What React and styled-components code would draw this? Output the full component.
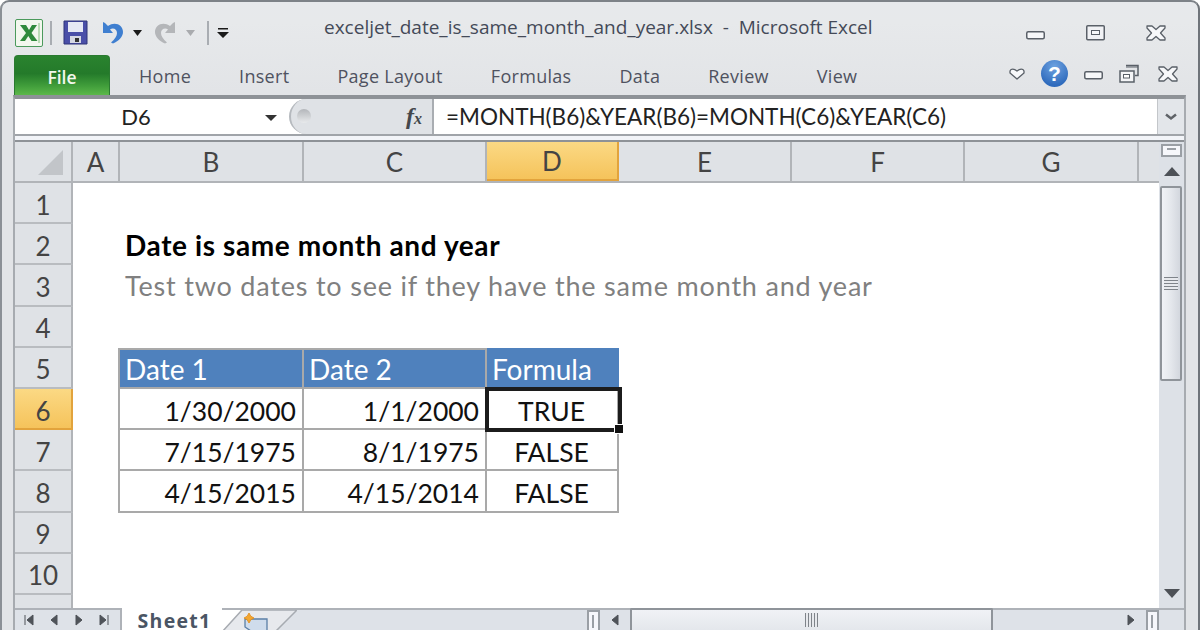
import styled, { createGlobalStyle } from 'styled-components';

const colWidths = '47px 184px 183px 132px 173px 173px 174px';
const columns = ['A', 'B', 'C', 'D', 'E', 'F', 'G'];
const tabs = ['Home', 'Insert', 'Page Layout', 'Formulas', 'Data', 'Review', 'View'];

const tableRows = {
    5: [{ text: 'Date 1', head: true, col: 2 }, { text: 'Date 2', head: true, col: 3 }, { text: 'Formula', head: true, col: 4 }],
    6: [{ text: '1/30/2000', col: 2, align: 'right' }, { text: '1/1/2000', col: 3, align: 'right' }, { text: 'TRUE', col: 4, align: 'center', selected: true }],
    7: [{ text: '7/15/1975', col: 2, align: 'right' }, { text: '8/1/1975', col: 3, align: 'right' }, { text: 'FALSE', col: 4, align: 'center' }],
    8: [{ text: '4/15/2015', col: 2, align: 'right' }, { text: '4/15/2014', col: 3, align: 'right' }, { text: 'FALSE', col: 4, align: 'center' }],
};

export default function App() {
    return (
        <Window>
            <GlobalStyle />
            <TitleBar>
                <QuickAccess>
                    <ExcelIcon />
                    <Divider />
                    <SaveIcon />
                    <UndoIcon color="#3f7fd0" />
                    <Caret color="#1a1a1a" />
                    <RedoIcon />
                    <Caret color="#a9abae" />
                    <Divider />
                    <CustomizeIcon />
                </QuickAccess>
                <WindowTitle>exceljet_date_is_same_month_and_year.xlsx&nbsp; -&nbsp; Microsoft Excel</WindowTitle>
                <WindowButtons>
                    <MinimizeIcon />
                    <MaximizeIcon />
                    <CloseIcon />
                </WindowButtons>
            </TitleBar>

            <TabRow>
                <FileTab>File</FileTab>
                <Tabs>
                    {tabs.map(tab => <Tab key={tab}>{tab}</Tab>)}
                </Tabs>
                <RibbonButtons>
                    <HeartChevron />
                    <HelpCircle>?</HelpCircle>
                    <MinimizeIcon />
                    <RestoreIcon />
                    <CloseIcon />
                </RibbonButtons>
            </TabRow>

            <Workbook>
                <FormulaBar>
                    <NameBox>
                        <NameText>D6</NameText>
                        <Caret color="#333" width={12} />
                    </NameBox>
                    <FormulaTools>
                        <Knob />
                        <Fx>f<sub>x</sub></Fx>
                    </FormulaTools>
                    <FormulaInput>=MONTH(B6)&amp;YEAR(B6)=MONTH(C6)&amp;YEAR(C6)</FormulaInput>
                    <ExpandButton><ChevronDown /></ExpandButton>
                </FormulaBar>
                <FormulaGap />

                <SheetArea>
                    <Sheet>
                        <ColumnHeaders>
                            <Corner><CornerTriangle /></Corner>
                            <ColumnGrid>
                                {columns.map(c => <ColumnHeader key={c} $active={c === 'D'}>{c}</ColumnHeader>)}
                            </ColumnGrid>
                        </ColumnHeaders>
                        {Array.from({ length: 11 }, (_, i) => i + 1).map(n => (
                            <Row key={n}>
                                <RowHeader $active={n === 6}>{n < 11 ? n : ''}</RowHeader>
                                <CellGrid>
                                    {n === 2 && <Title>Date is same month and year</Title>}
                                    {n === 3 && <Subtitle>Test two dates to see if they have the same month and year</Subtitle>}
                                    {(tableRows[n] || []).map(cell => (
                                        <Cell key={cell.col} $col={cell.col} $align={cell.align} $head={cell.head} $selected={cell.selected}>
                                            {cell.text}
                                            {cell.selected && <Selection><Handle /></Selection>}
                                        </Cell>
                                    ))}
                                </CellGrid>
                            </Row>
                        ))}
                    </Sheet>
                    <VScroll>
                        <SplitBox />
                        <ScrollArrow><TriangleUp /></ScrollArrow>
                        <VThumb><GripH /></VThumb>
                        <VTrack />
                        <ScrollArrow><TriangleDown /></ScrollArrow>
                    </VScroll>
                </SheetArea>

                <BottomBar>
                    <SheetNav>
                        <NavIcon d="M2 1v10M10 1L4 6l6 5z" />
                        <NavIcon d="M9 1L3 6l6 5z" />
                        <NavIcon d="M3 1l6 5-6 5z" />
                        <NavIcon d="M2 1l6 5-6 5zM10 1v10" />
                    </SheetNav>
                    <SheetTab>Sheet1</SheetTab>
                    <NewSheetTab />
                    <TabFill />
                    <HSplit />
                    <HArrow><NavIcon d="M9 1L3 6l6 5z" /></HArrow>
                    <HThumb><GripV /></HThumb>
                    <HTrack />
                    <HArrow><NavIcon d="M3 1l6 5-6 5z" /></HArrow>
                    <HEndSplit />
                </BottomBar>
            </Workbook>
        </Window>
    );
}

function ExcelIcon() {
    return (
        <Svg width="28" height="28" viewBox="0 0 28 28">
            <rect x="0.5" y="0.5" width="27" height="27" rx="1.5" fill="#f2f7ee" stroke="#4b9a5c" />
            <path d="M5 6h6l3 5 3-5h5l-5.5 8 6 8h-6l-3.2-5-3.3 5H5l6-8z" fill="#2f8a3c" />
            <path d="M23 4h2v20h-2z" fill="#bcdcb8" />
        </Svg>
    );
}

function SaveIcon() {
    return (
        <Svg width="25" height="25" viewBox="0 0 25 25">
            <path d="M1 1h23v23H1z" fill="#4a4fa8" />
            <path d="M1 1h23v23H1z" fill="none" stroke="#2f3478" />
            <path d="M5 2h15v10H5z" fill="#e6e9f4" />
            <path d="M7 16h11v7H7z" fill="#d6d8e4" />
            <path d="M12 18h4v4h-4z" fill="#333" />
        </Svg>
    );
}

function UndoIcon({ color }) {
    return (
        <Svg width="22" height="24" viewBox="0 0 22 24">
            <path d="M1 1v11h10L8 8.5c3-2 7-.5 7 3.5 0 3-2 6-6 9.5l2 1c6-2.5 10-7 10-11.500C21 4 13 0 6 5L3 2z" fill={color} />
        </Svg>
    );
}

function RedoIcon() {
    return (
        <Svg width="22" height="24" viewBox="0 0 22 24">
            <path d="M21 1v11H11l3-3.500c-3-2-7-.5-7 3.500 0 3 2 6 6 9.500l-2 1C5 20 1 15.500 1 11 1 4 9 0 16 5l3-3z" fill="#b4b6b9" />
        </Svg>
    );
}

function Caret({ color, width = 9 }) {
    return (
        <Svg width={width} height="6" viewBox="0 0 9 5" preserveAspectRatio="none">
            <path d="M0 0h9L4.500 5z" fill={color} />
        </Svg>
    );
}

function CustomizeIcon() {
    return (
        <Svg width="12" height="12" viewBox="0 0 12 12">
            <path d="M1 1h10v1.500H1zM0 5h12L6 11z" fill="#1a1a1a" />
        </Svg>
    );
}

function MinimizeIcon() {
    return (
        <Svg className="minimize" width="19" height="9" viewBox="0 0 19 9">
            <rect x="0.750" y="0.750" width="17.500" height="7" rx="1.500" fill="#f7f8fa" stroke="#5a6068" strokeWidth="1.500" />
        </Svg>
    );
}

function MaximizeIcon() {
    return (
        <Svg width="19" height="16" viewBox="0 0 19 16">
            <rect x="0.750" y="0.750" width="17.500" height="14" rx="1" fill="#f1f2f5" stroke="#5a6068" strokeWidth="1.500" />
            <rect x="5.500" y="5.500" width="8" height="4" fill="#f7f8fa" stroke="#5a6068" />
        </Svg>
    );
}

function CloseIcon() {
    return (
        <Svg className="close" width="20" height="16" viewBox="0 0 20 16">
            <path d="M1 1h5l4 3.500L14 1h5v2l-4.500 5L19 13v2h-5l-4-3.500L6 15H1v-2l4.500-5L1 3z" fill="#f7f8fa" stroke="#5a6068" strokeWidth="1.300" strokeLinejoin="round" />
        </Svg>
    );
}

function RestoreIcon() {
    return (
        <Svg width="20" height="19" viewBox="0 0 20 19">
            <path d="M7 1.500h12v10h-3" fill="none" stroke="#5a6068" strokeWidth="1.500" />
            <path d="M7 1h12v3H7z" fill="#5a6068" opacity="0.500" />
            <rect x="1" y="7" width="14" height="11" fill="#f4f5f7" stroke="#5a6068" strokeWidth="1.500" />
            <rect x="4.500" y="10.500" width="6" height="3.500" fill="#fff" stroke="#5a6068" />
        </Svg>
    );
}

function HeartChevron() {
    return (
        <Svg width="16" height="12" viewBox="0 0 16 12">
            <path d="M1 3c1-2.500 4-2.500 7 0 3-2.500 6-2.500 7 0v2l-7 6-7-6z" fill="#f7f8fa" stroke="#5a6068" strokeWidth="1.300" strokeLinejoin="round" />
        </Svg>
    );
}

function ChevronDown() {
    return (
        <Svg width="12" height="8" viewBox="0 0 12 8">
            <path d="M1 1.500l5 4 5-4" fill="none" stroke="#5f6368" strokeWidth="2.500" />
        </Svg>
    );
}

function TriangleUp() {
    return (
        <Svg width="16" height="9" viewBox="0 0 16 9">
            <path d="M0 9h16L8 0z" fill="#4d5157" />
        </Svg>
    );
}

function TriangleDown() {
    return (
        <Svg width="16" height="9" viewBox="0 0 16 9">
            <path d="M0 0h16L8 9z" fill="#4d5157" />
        </Svg>
    );
}

function NavIcon({ d }) {
    return (
        <Svg width="12" height="12" viewBox="0 0 12 12">
            <path d={d} fill="#4f5359" stroke="#4f5359" />
        </Svg>
    );
}

// sloped edges of the tab and the little new-sheet picture on it
function NewSheetTab() {
    return (
        <Svg width="75" height="22" viewBox="0 0 75 22">
            <path d="M0 0h20L0 22z" fill="#fff" />
            <path d="M20 0h55L53 22H0z" fill="#e7e9ed" />
            <path d="M0 22L20 0h55L53 22" fill="none" stroke="#a7abb1" strokeWidth="1.500" />
            <path d="M23 9h22v12H29l-6-4z" fill="#cfdcec" stroke="#5b7fa6" strokeWidth="1.300" />
            <path d="M27 3l1.800 3.200L32 8l-3.200 1.800L27 13l-1.800-3.200L22 8l3.200-1.800z" fill="#f3a62f" stroke="#e08a18" strokeWidth="0.800" />
        </Svg>
    );
}

const GlobalStyle = createGlobalStyle`
    html, body {
        margin: 0;
        padding: 0;
        background: #fff;
    }
`;

const Svg = styled.svg`
    display: block;
    flex: none;
`;

const Window = styled.div`
    box-sizing: border-box;
    width: 1200px;
    height: 630px;
    overflow: hidden;
    padding: 0 1px 0 1px;
    border-top: 2px solid #7d8288;
    border-left: 2px solid #8b9096;
    border-right: 2px solid #6f747a;
    border-radius: 9px 9px 0 0;
    background: linear-gradient(#e7e9ec, #e7e9eb 20px, #e2e4e7 90px);
    font-family: "Open Sans", sans-serif;
`;

const TitleBar = styled.div`
    position: relative;
    display: flex;
    align-items: center;
    height: 53px;
    padding-left: 12px;
`;

const QuickAccess = styled.div`
    display: flex;
    align-items: center;
    margin-top: 8px;

    & > svg:nth-child(1) { margin-right: 7px; }
    & > svg:nth-child(3) { margin: 0 14px 0 11px; }
    & > svg:nth-child(4) { margin-right: 9px; }
    & > svg:nth-child(5) { margin-right: 12px; }
    & > svg:nth-child(6) { margin-right: 10px; }
    & > svg:nth-child(7) { margin-right: 12px; }
    & > svg:nth-child(9) { margin-left: 8px; }
`;

const Divider = styled.div`
    width: 2px;
    height: 24px;
    background: #a9adb2;
    flex: none;
`;

const WindowTitle = styled.div`
    position: absolute;
    left: 321px;
    top: 12px;
    font-size: 19px;
    color: #444a58;
    white-space: nowrap;
`;

const WindowButtons = styled.div`
    display: flex;
    align-items: center;
    gap: 41px;
    margin-left: auto;
    margin-right: 31px;
    margin-top: 8px;

    .minimize {
        margin-top: 6px;
    }
`;

const TabRow = styled.div`
    display: flex;
    align-items: stretch;
    height: 40px;
    padding-left: 11px;
`;

const FileTab = styled.div`
    display: flex;
    align-items: center;
    justify-content: center;
    width: 96px;
    box-sizing: border-box;
    border: 1px solid #2a7a30;
    border-bottom: none;
    border-radius: 4px 4px 0 0;
    color: #f3f8ee;
    font-size: 17.500px;
    font-weight: 600;
    padding-top: 2px;
    background: linear-gradient(#2a832f, #247a2a 45%, #3f9c3a 75%, #5cb84a);
`;

const Tabs = styled.div`
    display: flex;
    align-items: center;
    gap: 48px;
    margin-left: 29px;
    padding-top: 2px;
`;

const Tab = styled.div`
    font-size: 18px;
    letter-spacing: 0.300px;
    color: #4f5260;
    white-space: nowrap;
`;

const RibbonButtons = styled.div`
    display: flex;
    align-items: center;
    margin-left: auto;
    margin-right: 19px;
    padding-bottom: 3px;
    gap: 16px;

    .minimize {
        margin-top: 3px;
    }
    .close {
        margin-left: 3px;
    }
`;

const HelpCircle = styled.div`
    width: 27px;
    height: 27px;
    border-radius: 50%;
    background: radial-gradient(circle at 50% 25%, #6ea2e0, #2f6bbd 75%);
    color: #fff;
    font-family: "Liberation Sans", sans-serif;
    font-size: 21px;
    font-weight: 700;
    line-height: 27px;
    text-align: center;
`;

const Workbook = styled.div`
    box-sizing: border-box;
    margin-left: 10px;
    margin-right: 11px;
    border-top: 4px solid #8e9297;
    border-left: 2px solid #a7abb0;
    border-right: 2px solid #a7abb0;
    background: #dfe3e8;
`;

const FormulaBar = styled.div`
    display: flex;
    height: 35px;
    background: #fff;
`;

const NameBox = styled.div`
    position: relative;
    display: flex;
    align-items: center;
    width: 274px;
    flex: none;
    background: #fff;

    & > svg {
        position: absolute;
        left: 250px;
        top: 16px;
    }
`;

const NameText = styled.div`
    width: 100%;
    text-align: center;
    font-size: 22px;
    color: #222;
    font-family: Lato, sans-serif;
    padding-right: 32px;
    box-sizing: border-box;
`;

const FormulaTools = styled.div`
    position: relative;
    display: flex;
    align-items: center;
    justify-content: flex-end;
    width: 145px;
    flex: none;
    box-sizing: border-box;
    padding-right: 10px;
    background: #dfe2e6;
    border-left: 2px solid #b5b9be;
    border-right: 2px solid #a9adb2;
    border-radius: 18px 0 0 18px;
`;

const Knob = styled.div`
    position: absolute;
    left: 6px;
    top: 10px;
    width: 14px;
    height: 14px;
    border-radius: 50%;
    background: linear-gradient(#b3b6ba, #e8eaec);
`;

const Fx = styled.div`
    font-family: "Liberation Serif", serif;
    font-style: italic;
    font-weight: 700;
    font-size: 24px;
    color: #44474c;

    sub {
        font-size: 16px;
        vertical-align: baseline;
    }
`;

const FormulaInput = styled.div`
    flex: 1;
    display: flex;
    align-items: center;
    padding-left: 12px;
    font-family: Lato, sans-serif;
    font-size: 22.500px;
    color: #222;
    white-space: nowrap;
`;

const ExpandButton = styled.div`
    display: flex;
    align-items: center;
    justify-content: center;
    width: 26px;
    flex: none;
    background: #e3e6ea;
    border-left: 1px solid #c3c6ca;
`;

const FormulaGap = styled.div`
    height: 4px;
    background: #f2f4f8;
    border-top: 2px solid #a0a4a9;
    border-bottom: 2px solid #8e9297;
`;

const SheetArea = styled.div`
    display: flex;
    height: 466px;
    overflow: hidden;
`;

const Sheet = styled.div`
    flex: none;
    width: 1144px;
    background: #fff;
`;

const ColumnHeaders = styled.div`
    display: flex;
    height: 41px;
    box-sizing: border-box;
    background: #dfe2e6;
    border-bottom: 2px solid #b1b4b8;
`;

const Corner = styled.div`
    position: relative;
    width: 58px;
    flex: none;
    box-sizing: border-box;
    border-right: 2px solid #b1b4b8;
`;

const CornerTriangle = styled.div`
    position: absolute;
    right: 8px;
    bottom: 6px;
    width: 0;
    height: 0;
    border-left: 25px solid transparent;
    border-bottom: 25px solid #c2c5c9;
`;

const ColumnGrid = styled.div`
    display: grid;
    grid-template-columns: ${colWidths};
`;

const ColumnHeader = styled.div`
    display: flex;
    align-items: center;
    justify-content: center;
    box-sizing: border-box;
    border-right: 2px solid ${p => (p.$active ? '#e2a33c' : '#b1b4b8')};
    font-family: Lato, sans-serif;
    font-size: 26px;
    color: #444;
    background: ${p => (p.$active ? 'linear-gradient(#fbd984, #f5c35b)' : 'transparent')};
    border-bottom: ${p => (p.$active ? '2px solid #e2a33c' : 'none')};
`;

const Row = styled.div`
    display: flex;
    height: 41.200px;
`;

const RowHeader = styled.div`
    display: flex;
    align-items: center;
    justify-content: center;
    width: 58px;
    flex: none;
    box-sizing: border-box;
    padding-top: 4px;
    background: ${p => (p.$active ? 'linear-gradient(#fbd984, #f5c35b)' : '#dfe2e6')};
    border-right: 2px solid ${p => (p.$active ? '#e2a33c' : '#b1b4b8')};
    border-bottom: 2px solid ${p => (p.$active ? '#e2a33c' : '#b9bcc0')};
    font-family: Lato, sans-serif;
    font-size: 26px;
    color: #444;
`;

const CellGrid = styled.div`
    display: grid;
    grid-template-columns: ${colWidths};
    grid-template-rows: 41.200px;
`;

const Title = styled.div`
    grid-column: 2 / 8;
    grid-row: 1;
    display: flex;
    align-items: center;
    padding: 0 0 0 5px;
    font-family: Lato, sans-serif;
    font-weight: 700;
    font-size: 28px;
    letter-spacing: 0.600px;
    color: #000;
    white-space: nowrap;
`;

const Subtitle = styled(Title)`
    font-weight: 400;
    font-size: 27px;
    letter-spacing: 0.800px;
    color: #808080;
`;

const Cell = styled.div`
    position: relative;
    z-index: ${p => (p.$selected ? 1 : 'auto')};
    grid-column: ${p => p.$col};
    grid-row: 1;
    display: flex;
    align-items: center;
    justify-content: ${p => (p.$align === 'right' ? 'flex-end' : p.$align === 'center' ? 'center' : 'flex-start')};
    box-sizing: border-box;
    padding: ${p => (p.$head ? '1px' : '5px')} 6px 0 5px;
    font-family: Lato, sans-serif;
    font-size: ${p => (p.$head ? '28px' : '26.500px')};
    color: ${p => (p.$head ? '#fff' : '#111')};
    background: ${p => (p.$head ? '#4f81bd' : '#fff')};
    border-right: 2px solid ${p => (p.$head && p.$col === 4 ? '#4f81bd' : '#a9a9a9')};
    border-bottom: 2px solid #a9a9a9;
    border-left: ${p => (p.$col === 2 ? '2px solid #a9a9a9' : 'none')};
    margin-left: ${p => (p.$col === 2 ? '-2px' : '0')};
    ${p => (p.$head ? `border-top: 2px solid ${p.$col === 4 ? '#4f81bd' : '#a9a9a9'};` : '')}
    white-space: nowrap;
`;

const Selection = styled.div`
    position: absolute;
    left: -2px;
    top: -2px;
    right: -5px;
    bottom: -4px;
    border: 4px solid #1c1c1c;
`;

const Handle = styled.div`
    position: absolute;
    right: -6px;
    bottom: -6px;
    box-sizing: border-box;
    width: 10px;
    height: 10px;
    background: #111;
    border: 1px solid #fff;
`;

const VScroll = styled.div`
    flex: 1;
    display: flex;
    flex-direction: column;
    background: #dde1e7;
`;

const SplitBox = styled.div`
    position: relative;
    height: 13px;
    margin: 2px 2px 0;
    flex: none;
    box-sizing: border-box;
    background: #f6f7fb;
    border: 2px solid #9a9fa5;

    &::after {
        content: '';
        position: absolute;
        left: 4px;
        right: 4px;
        top: 2px;
        height: 2px;
        background: #9a9fa5;
    }
`;

const ScrollArrow = styled.div`
    display: flex;
    align-items: center;
    justify-content: center;
    height: 29px;
    flex: none;
`;

const VThumb = styled.div`
    display: flex;
    align-items: center;
    justify-content: center;
    height: 195px;
    margin: 0 2px 0 1px;
    flex: none;
    box-sizing: border-box;
    border: 2px solid #8f949a;
    border-radius: 2px;
    background: linear-gradient(90deg, #f0f2f6, #e4e7ec 50%, #d3d7de);
`;

const GripH = styled.div`
    width: 14px;
    height: 13px;
    background: repeating-linear-gradient(#7f848a 0 1px, #e7e9ed 1px 3px);
`;

const VTrack = styled.div`
    flex: 1;
`;

const BottomBar = styled.div`
    display: flex;
    align-items: stretch;
    height: 22px;
    box-sizing: border-box;
    background: #dee2e8;
    border-top: 2px solid #aeb2b8;
`;

const SheetNav = styled.div`
    display: flex;
    align-items: center;
    gap: 13px;
    width: 107px;
    flex: none;
    box-sizing: border-box;
    padding-left: 8px;
    border-right: 2px solid #aeb2b8;
`;

const SheetTab = styled.div`
    width: 100px;
    flex: none;
    height: 24px;
    margin-top: -2px;
    box-sizing: border-box;
    padding: 4px 0 0 5px;
    text-align: center;
    background: #fff;
    font-family: "Open Sans", sans-serif;
    font-size: 19.500px;
    font-weight: 700;
    letter-spacing: 1.300px;
    color: #4a5564;
    line-height: 18px;
    white-space: nowrap;
`;

const TabFill = styled.div`
    width: 290px;
    flex: none;
`;

const HSplit = styled.div`
    position: relative;
    width: 13px;
    flex: none;
    box-sizing: border-box;
    background: #f6f7fb;
    border: 2px solid #9a9fa5;
    border-bottom: none;

    &::after {
        content: '';
        position: absolute;
        left: 3px;
        top: 3px;
        bottom: 2px;
        width: 2px;
        background: #9a9fa5;
    }
`;

const HArrow = styled.div`
    display: flex;
    align-items: center;
    justify-content: center;
    width: 30px;
    flex: none;
`;

const HThumb = styled.div`
    display: flex;
    align-items: center;
    justify-content: center;
    width: 363px;
    flex: none;
    box-sizing: border-box;
    margin-top: -2px;
    border: 2px solid #8f949a;
    border-bottom: none;
    border-radius: 2px 2px 0 0;
    background: linear-gradient(#f0f2f6, #e4e7ec);
`;

const GripV = styled.div`
    width: 13px;
    height: 14px;
    background: repeating-linear-gradient(90deg, #7f848a 0 1px, #e7e9ed 1px 3px);
`;

const HTrack = styled.div`
    width: 123px;
    flex: none;
`;

const HEndSplit = styled(HSplit)`
    width: 13px;
`;
